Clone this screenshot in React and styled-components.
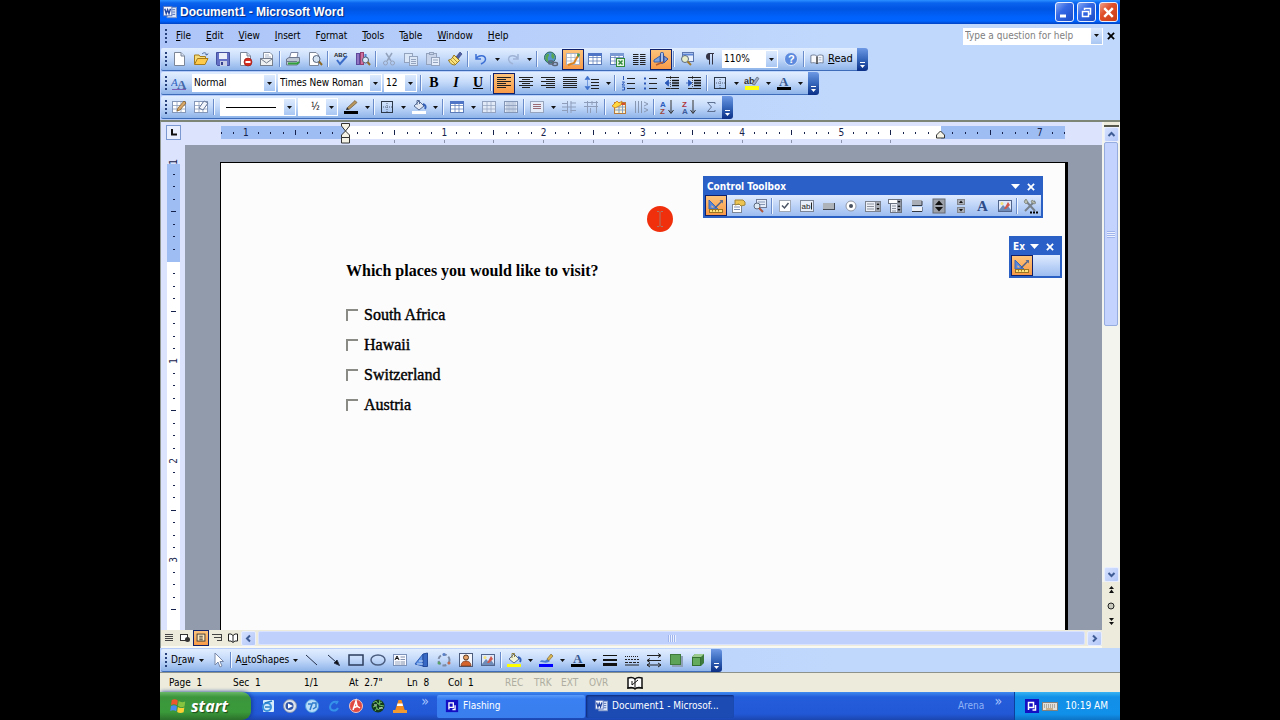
import React, { useState } from 'react';
import styled, { createGlobalStyle, css } from 'styled-components';

const GlobalStyle = createGlobalStyle`
  * {
    box-sizing: border-box;
  }
  body {
    margin: 0;
    background: #000;
    overflow: hidden;
  }
  button, select, input {
    font: inherit;
    color: inherit;
    margin: 0;
    padding: 0;
    border: 0;
    background: none;
    border-radius: 0;
  }
  svg {
    display: block;
    flex: none;
  }
`;

const Screen = styled.div`
  position: relative;
  display: flex;
  flex-direction: column;
  height: 100vh;
  aspect-ratio: 4 / 3;
  margin: 0 auto;
  overflow: hidden;
  background: #c0d8fc;
  color: #000;
  font-family: 'DejaVu Sans Condensed', 'DejaVu Sans', sans-serif;
  font-size: 10px;
  line-height: 14px;
`;

/* title bar */

const TitleBar = styled.header`
  display: flex;
  align-items: center;
  gap: 3px;
  height: 24px;
  padding: 0 2px;
  background: linear-gradient(#2b90ff 0, #0a63ee 3px, #0055e2 9px, #0062fc 17px, #0064ff 21px, #0043c4 24px);
  color: #fff;
`;

const Title = styled.h1`
  flex: 1;
  margin: 0;
  font-family: 'Liberation Sans', sans-serif;
  font-size: 12px;
  line-height: 16px;
  font-weight: bold;
  text-shadow: 1px 1px 1px #0a2a80;
`;

const Caption = styled.button`
  display: grid;
  place-items: center;
  width: 19px;
  height: 20px;
  border: 1px solid #e8efff;
  border-radius: 3px;
  background: ${(p) => (p.$close ? 'linear-gradient(135deg, #f0a088, #e0502a 40%, #c83c14)' : 'linear-gradient(135deg, #86a8f4, #3468e4 40%, #1c4cc8)')};
`;

/* menu bar */

const MenuBar = styled.nav`
  display: flex;
  align-items: center;
  height: 24px;
  padding: 0 2px 0 1px;
  background: linear-gradient(90deg, #adc5f8, #c0d8fc 70%);
`;

const MenuButton = styled.button`
  padding: 0 7px 0 8px;
  white-space: nowrap;
`;

const Grip = styled.span`
  flex: none;
  width: 2px;
  height: 14px;
  margin: 0 1px 0 4px;
  background: repeating-linear-gradient(#27417c 0 2px, transparent 2px 4px);
`;

const Spacer = styled.span`
  flex: 1;
`;

const HelpBox = styled.div`
  display: flex;
  height: 17px;
  margin-right: 1px;
  background: #fff;
`;

const HelpInput = styled.input`
  width: 128px;
  padding: 0 2px;
  color: #777;
  &::placeholder {
    color: #808080;
    opacity: 1;
  }
`;

const CloseDocument = styled.button`
  display: grid;
  place-items: center;
  width: 14px;
  height: 16px;
`;

/* toolbars */

const ToolRow = styled.div`
  display: flex;
  height: 24px;
  padding-left: 1px;
  background: linear-gradient(90deg, #b4caf9, #c0d8fc 70%);
`;

const ToolBody = styled.div`
  display: flex;
  align-items: center;
  height: 23px;
  padding-right: ${(p) => p.$end || 0}px;
  border-bottom: 1px solid #3f6cb8;
  border-radius: 2px 0 0 2px;
  background: linear-gradient(#e2eeff, #c6dbfa 45%, #8fb4ea);
`;

const EndCap = styled.button`
  display: flex;
  align-items: flex-end;
  justify-content: center;
  width: 11px;
  height: 23px;
  padding-bottom: 2px;
  border-radius: 0 3px 3px 0;
  background: linear-gradient(#6d98e4, #3566ba 50%, #0a2f86);
`;

const pressed = css`
  border: 1px solid #10206a;
  background: linear-gradient(#fdc37a, #f89a48);
`;

const Tool = styled.button`
  display: grid;
  place-items: center;
  flex: none;
  width: 22px;
  height: 21px;
  ${(p) => p.$on && pressed}
`;

const CaretTool = styled(Tool)`
  width: 10px;
`;

const TextTool = styled.button`
  display: flex;
  align-items: center;
  gap: 4px;
  padding: 0 ${(p) => p.$pad || 3}px;
  font-size: ${(p) => p.$size || 10}px;
  white-space: nowrap;
`;

const Separator = styled.span`
  flex: none;
  width: 2px;
  height: 16px;
  margin: 0 ${(p) => (p.$wide ? 2 : 1)}px;
  border-left: 1px solid #6a8ccb;
  border-right: 1px solid #f1f7ff;
`;

const Letter = styled.span`
  font-family: 'Liberation Serif', serif;
  font-size: 14px;
  font-weight: bold;
  font-style: ${(p) => (p.$italic ? 'italic' : 'normal')};
  text-decoration: ${(p) => (p.$underline ? 'underline' : 'none')};
`;

const ComboBox = styled.label`
  display: grid;
  align-items: center;
  flex: none;
  width: ${(p) => p.$width}px;
  height: 18px;
  margin: 0 2px 0 ${(p) => p.$before || 0}px;
  background: #fff;
  > * {
    grid-area: 1 / 1;
  }
`;

const ComboSelect = styled.select`
  appearance: none;
  width: 100%;
  height: 18px;
  padding-left: ${(p) => p.$indent || 2}px;
`;

const ComboArrow = styled.span`
  display: grid;
  place-items: center;
  justify-self: end;
  width: 11px;
  height: 16px;
  margin-right: 1px;
  background: linear-gradient(#deebfe, #a9c7f3);
  pointer-events: none;
`;

const ComboSample = styled.span`
  height: 1px;
  margin: 0 20px 0 6px;
  background: #000;
  pointer-events: none;
`;

/* work area */

const Workspace = styled.main`
  display: flex;
  flex: 1;
  min-height: 0;
  border-top: 2px solid #7d8577;
  border-left: 1px solid #8f9690;
`;

const DocPane = styled.section`
  display: flex;
  flex: 1;
  flex-direction: column;
  min-width: 0;
`;

const RulerRow = styled.div`
  display: flex;
  align-items: flex-start;
  flex: none;
  height: 23px;
  padding: 3px 37px 0 5px;
  background: #dbe3fd;
`;

const TabStop = styled.button`
  display: grid;
  place-items: center;
  width: 15px;
  height: 15px;
  margin-right: 40px;
  border: 1px solid #7c98d0;
  background: #e8eefe;
`;

const HRuler = styled.div`
  display: flex;
  justify-content: space-between;
  flex: 1;
  height: 13px;
  margin-top: 1px;
  background: linear-gradient(90deg, #9ebdf3 14.7%, #fff 14.7% 85.3%, #9ebdf3 85.3%);
`;

const HMark = styled.span`
  display: flex;
  flex-direction: column;
  align-items: center;
  width: 0;
  height: 18px;
  overflow: visible;
  white-space: nowrap;
  color: #16224c;
`;

const HTick = styled.i`
  width: 1px;
  height: ${(p) => (p.$long ? 5 : 2)}px;
  margin: ${(p) => (p.$long ? '4px 0' : '6px 0 5px')};
  background: #16224c;
`;

const HLabel = styled.b`
  height: 13px;
  line-height: 13px;
  font-weight: normal;
`;

const TabTick = styled.i`
  width: 1px;
  height: 3px;
  margin-top: 1px;
  background: #8c95ac;
`;

const Marker = styled.svg`
  margin-top: -3px;
`;

const DocRow = styled.div`
  display: flex;
  flex: 1;
  min-height: 0;
`;

const VRulerColumn = styled.div`
  display: flex;
  flex: none;
  width: 24px;
  padding: 17px 5px 0 6px;
  background: #dbe3fd;
`;

const VRuler = styled.div`
  display: flex;
  flex: 1;
  flex-direction: column;
  justify-content: space-between;
  padding-bottom: 20px;
  background: linear-gradient(#dbe3fd 2px, #9ebdf3 2px 100px, #fff 100px);
`;

const VMark = styled.span`
  display: flex;
  align-items: center;
  justify-content: center;
  height: 0;
  overflow: visible;
  color: #16224c;
`;

const VTick = styled.i`
  flex: none;
  width: ${(p) => (p.$long ? 5 : 2)}px;
  height: 1px;
  background: #16224c;
`;

const VLabel = styled.b`
  font-weight: normal;
  transform: rotate(-90deg);
`;

const Desk = styled.div`
  display: flex;
  flex: 1;
  min-width: 0;
  padding: 17px 34px 0 35px;
  background: #919bab;
`;

const Page = styled.article`
  flex: 1;
  padding: 98px 125px 0;
  border: solid #000;
  border-width: 1px 3px 0 1px;
  background: #fdfcfd;
  font-family: 'Liberation Serif', serif;
`;

const Question = styled.h2`
  margin: 0 0 19px;
  font-size: 16px;
  line-height: 20px;
  font-weight: bold;
`;

const Option = styled.label`
  display: flex;
  align-items: center;
  gap: 6px;
  height: 30px;
  font-size: 16px;
  line-height: 20px;
  -webkit-text-stroke: 0.4px #000;
`;

const Tick = styled.input`
  appearance: none;
  width: 12px;
  height: 12px;
  border: solid #8b8b85;
  border-width: 2px 0 0 2px;
  &:checked {
    background: #666;
  }
`;

/* scroll bars */

const BottomBar = styled.div`
  display: flex;
  align-items: center;
  flex: none;
  height: 18px;
  border-bottom: 2px solid #f9f9f2;
  background: #ecebdc;
`;

const ViewButton = styled.button`
  display: grid;
  place-items: center;
  width: 16px;
  height: 16px;
  ${(p) => p.$on && pressed}
`;

const ScrollButton = styled.button`
  display: grid;
  place-items: center;
  flex: none;
  width: 15px;
  height: 15px;
  border: 1px solid #e8eefe;
  border-radius: 2px;
  background: linear-gradient(135deg, #d4e0fe, #b4c8f8);
`;

const HThumb = styled.div`
  display: grid;
  place-items: center;
  flex: 1;
  height: 14px;
  margin: 0 2px;
  border: 1px solid #d9e3ff;
  border-radius: 2px;
  background: #c0d0fc;
`;

const VScroll = styled.aside`
  display: flex;
  flex: none;
  flex-direction: column;
  align-items: center;
  width: 18px;
  background: #f4f4ee;
`;

const SplitBox = styled.span`
  width: 15px;
  height: 5px;
  border-bottom: 2px solid #55564a;
  background: #ecebdc;
`;

const VThumb = styled.div`
  display: grid;
  place-items: center;
  width: 14px;
  height: 35%;
  border: 1px solid #96acdf;
  border-radius: 2px;
  background: #c3d3fd;
`;

const Browse = styled.div`
  display: flex;
  flex-direction: column;
  align-items: center;
  width: 100%;
  padding-bottom: 18px;
  background: #ecebdc;
`;

const BrowseButton = styled.button`
  display: grid;
  place-items: center;
  width: 15px;
  height: 16px;
`;

const GripLines = styled.span`
  width: 8px;
  height: 7px;
  background: repeating-linear-gradient(${(p) => (p.$vertical ? '0deg' : '90deg')}, #9fb4ea 0 1px, #eaf0ff 1px 2px);
`;

/* status bar */

const DrawRow = styled(ToolRow)`
  height: 25px;
  padding-top: 1px;
  border-bottom: 1px solid #8d938b;
`;

const StatusBar = styled.footer`
  display: flex;
  align-items: center;
  flex: none;
  height: 19px;
  padding: 1px 0 0 9px;
  background: #ecebdc;
`;

const Cell = styled.span`
  width: ${(p) => p.$width}px;
  white-space: pre;
  color: ${(p) => (p.$off ? '#aeada0' : '#000')};
`;

/* taskbar */

const Taskbar = styled.footer`
  display: flex;
  align-items: center;
  flex: none;
  height: 28px;
  background: linear-gradient(#3f8bf0, #245ddb 5px, #2258d6 22px, #1b46b0);
  color: #fff;
`;

const Start = styled.button`
  display: flex;
  align-items: center;
  gap: 5px;
  width: 91px;
  height: 28px;
  padding-left: 10px;
  border-radius: 0 9px 9px 0;
  background: linear-gradient(#69b868, #3c963c 5px, #3a9a3a 20px, #2b6f2b);
  box-shadow: 1px 0 4px #123a90;
  font-family: 'Open Sans', sans-serif;
  font-size: 16px;
  line-height: 20px;
  font-weight: bold;
  font-style: italic;
  text-shadow: 1px 1px 1px #1b4a1b;
`;

const QuickLaunch = styled.div`
  display: flex;
  align-items: center;
  margin: 0 1px 0 6px;
`;

const Chevron = styled.button`
  width: 22px;
  height: 24px;
  margin-left: 3px;
  padding-bottom: 10px;
  font-size: 14px;
  line-height: 14px;
  color: #a9c6ff;
`;

const Task = styled.button`
  display: flex;
  align-items: center;
  gap: 4px;
  width: 148px;
  height: 23px;
  margin-right: 1px;
  padding-left: 8px;
  border-radius: 2px;
  background: ${(p) => (p.$on ? '#1c4bb4' : 'linear-gradient(#5a9bfa, #3a80f2 4px, #3a7eee)')};
  box-shadow: ${(p) => (p.$on ? 'inset 1px 1px 2px #0e2c78' : 'none')};
  white-space: nowrap;
`;

const Band = styled.span`
  color: #8fb2f5;
`;

const Tray = styled.div`
  display: flex;
  align-items: center;
  gap: 2px;
  height: 28px;
  margin-left: 5px;
  padding: 0 12px 0 9px;
  border-left: 1px solid #0d3f9c;
  background: linear-gradient(#38b4f4, #1290e8 5px, #1190ea 22px, #0d73c4);
`;

const Clock = styled.time`
  margin-left: 5px;
`;

/* floating windows */

const Floating = styled.section`
  position: absolute;
  top: ${(p) => p.$top}px;
  right: ${(p) => p.$right}px;
  border: 2px solid #2a5fc4;
  background: linear-gradient(#dbe8fe 18px, #9dbdf0);
`;

const FloatTitle = styled.div`
  display: flex;
  align-items: center;
  height: 17px;
  padding: 0 2px;
  background: #2a60c8;
  color: #fff;
  font-weight: bold;
`;

const FloatButton = styled.button`
  display: grid;
  place-items: center;
  width: 16px;
  height: 14px;
`;

const FloatBody = styled.div`
  display: flex;
  align-items: center;
  width: ${(p) => p.$width}px;
  height: 21px;
`;

const FloatSeparator = styled(Separator)`
  margin: 0 1px 0 0;
`;

const Pointer = styled.div`
  position: absolute;
  top: 206px;
  left: 52%;
  display: grid;
  place-items: center;
  width: 26px;
  height: 26px;
  margin-left: -12px;
  border-radius: 50%;
  background: #f0300c;
`;

const bars = (ys, x1, x2, color = '#222', w = 1) => ys.map((y) => (
  <path key={y} d={`M${x1} ${y}H${x2}`} stroke={color} strokeWidth={w} />
));

const tableGrid = (stroke = '#5b7cb8', fill = '#fff') => (
  <>
    <rect x="1.5" y="2.5" width="13" height="11" fill={fill} stroke={stroke} />
    <path d="M2 6.5H14M2 10H14M6 3V13M10 3V13" stroke={stroke} opacity=".75" />
  </>
);

const sheet = (
  <>
    <path d="M3.5 1.5H10L13.5 5V14.5H3.5Z" fill="#fff" stroke="#7b8699" />
    <path d="M10 1.5V5H13.5" fill="#d5deee" stroke="#7b8699" />
  </>
);

const wordLogo = (
  <>
    <rect x="5.5" y="2.5" width="10" height="11" fill="#dce7fb" stroke="#7e95c6" />
    <path d="M11 5H14M11 7.5H14M11 10H14" stroke="#4b6bb0" />
    <rect x="1.5" y="1.5" width="9" height="10" fill="#f4f7ff" stroke="#5573bd" />
    <path d="M3 4L4.5 9L6 5L7.5 9L9 4" fill="none" stroke="#2347a0" strokeWidth="1.5" />
  </>
);

const rulerTriangle = (
  <>
    <path d="M1 2L10 11H1Z" fill="#5a86d8" stroke="#3a66b8" />
    <path d="M3.5 7L6 9.5H3.5Z" fill="#fbb868" />
    <path d="M7 10L14 3" stroke="#4a5f8c" strokeWidth="1.5" />
    <path d="M11.500 2H15V5.500Z" fill="#5a6c90" />
    <rect x="1.5" y="11.5" width="13" height="3" fill="#ffe27a" stroke="#9a7420" />
    <path d="M4.5 12V13.5M7.5 12V13.5M10.5 12V13.5" stroke="#9a7420" />
  </>
);

const screenLogo = (
  <>
    <rect x="1" y="1" width="14" height="14" fill="#1310c4" />
    <path d="M4.500 4.500H9.500V9.500H4.500ZM4.500 9V12M11.500 7V12H8.500" fill="none" stroke="#fff" strokeWidth="1.5" />
  </>
);

const picture = (
  <>
    <rect x="1.5" y="2.5" width="13" height="11" fill="#dfe9fa" stroke="#51658c" />
    <path d="M2 12L6 7L9 10L11 8L14 12V13H2Z" fill="#6f8cb8" />
    <path d="M7 11L11 4L13 7L9 11Z" fill="#d0584c" />
    <circle cx="5" cy="5.5" r="1.5" fill="#f4e27a" />
  </>
);

const icons = {
  newDoc: sheet,
  open: (
    <>
      <path d="M1.5 13V4H6L7 5.5H12.5V8" fill="#f7dc7a" stroke="#a77c1c" />
      <path d="M1.5 13.5L4.5 7.5H15L12 13.5Z" fill="#ffc94a" stroke="#a77c1c" />
      <path d="M9 3C11 1 13 1.5 14 4M14 4L12.5 3.5M14 4L15 2.5" fill="none" stroke="#4a6aa0" />
    </>
  ),
  save: (
    <>
      <path d="M1.5 1.5H14.5V14.5H2.5L1.5 13.5Z" fill="#6470c4" stroke="#4650a0" />
      <rect x="4" y="2" width="8" height="6" fill="#e9eefa" />
      <rect x="5" y="10" width="7" height="5" fill="#c7cde4" />
      <rect x="6" y="11" width="2" height="3" fill="#363f8c" />
    </>
  ),
  permission: (
    <>
      {sheet}
      <circle cx="11" cy="11" r="4" fill="#d62c20" stroke="#8f150e" strokeWidth=".6" />
      <path d="M8.5 11H13.5" stroke="#fff" strokeWidth="2" />
    </>
  ),
  mail: (
    <>
      <path d="M4.5 7V1.5H11L13.5 4V8" fill="#fff" stroke="#8790a0" />
      <path d="M6 4H10M6 6H12" stroke="#a9b4c8" />
      <rect x="1.5" y="7.5" width="12" height="7" fill="#eef0f2" stroke="#767f8e" />
      <path d="M2 8L7.5 12L13 8" fill="none" stroke="#767f8e" />
    </>
  ),
  print: (
    <>
      <path d="M4.5 7L6 1.5H13L12 7" fill="#fff" stroke="#7884a0" />
      <path d="M1.5 8L4 6.5H14.5V12L12 14H1.5Z" fill="#bcc5d2" stroke="#6c7890" />
      <path d="M2 10.5H12" stroke="#6c7890" />
      <path d="M3 12.5H12L14 11" fill="none" stroke="#2fa03a" strokeWidth="2" />
    </>
  ),
  preview: (
    <>
      <path d="M2.5 1.5H9L11.5 4V14.5H2.5Z" fill="#fff" stroke="#7b8699" />
      <circle cx="9.5" cy="8" r="3.5" fill="#d4e4f4" stroke="#56657c" />
      <path d="M12 10.5L15 14" stroke="#8e6a28" strokeWidth="2" />
    </>
  ),
  spelling: (
    <>
      <text x="1" y="6" fontSize="6" fontWeight="bold" fontFamily="Liberation Sans" fill="#222">ABC</text>
      <path d="M4 9L7 13L14 5" fill="none" stroke="#3b6cc8" strokeWidth="2" />
    </>
  ),
  research: (
    <>
      <rect x="1.5" y="2.5" width="3" height="11" fill="#8f74c4" stroke="#5d489c" />
      <rect x="5.5" y="1.5" width="3" height="12" fill="#d070a0" stroke="#94406c" />
      <rect x="9.5" y="3" width="2" height="9" fill="#4f84d0" />
      <circle cx="10.5" cy="9" r="3" fill="#d8e8f8" stroke="#4d5d74" />
      <path d="M12.5 11L15 14" stroke="#93702c" strokeWidth="2" />
    </>
  ),
  cut: (
    <g fill="none" stroke="#94a3bd">
      <path d="M5 2L10 10M11 2L6 10" strokeWidth="1.5" />
      <circle cx="4.5" cy="12" r="2" />
      <circle cx="11.5" cy="12" r="2" />
    </g>
  ),
  copy: (
    <g fill="#dbe6f7" stroke="#94a3bd">
      <rect x="1.5" y="2.5" width="8" height="9" />
      <rect x="6.5" y="5.5" width="8" height="9" />
      <path d="M8 8.5H13M8 10.5H13M8 12.5H13" />
    </g>
  ),
  paste: (
    <g fill="#c6d3e8" stroke="#94a3bd">
      <rect x="1.5" y="2.5" width="10" height="11" />
      <rect x="4.5" y="1.5" width="4" height="2" />
      <rect x="6.5" y="6.5" width="8" height="8" fill="#e5edfa" />
      <path d="M8 9H13M8 11.5H13" />
    </g>
  ),
  painter: (
    <>
      <path d="M9 6L13 1L15 3L11 8Z" fill="#4e5fa4" stroke="#2c3870" strokeWidth=".6" />
      <path d="M7 4L12.5 9.5L8 14C5 14 3 12.5 1.5 9C4 9 5.5 7 7 4Z" fill="#fae27c" stroke="#97761d" />
      <path d="M4 9L8 13M6 7L10 11" stroke="#b8952e" />
    </>
  ),
  undo: <path d="M3 3V8H8M3 8C5 4 12 3.5 12.5 8C12.5 11 10 12 8 13" fill="none" stroke="#3c6fd4" strokeWidth="1.500" />,
  redo: <path d="M13 3V8H8M13 8C11 4 4 3.5 3.5 8C3.5 11 6 12 8 13" fill="none" stroke="#9fb3d6" strokeWidth="1.5" />,
  link: (
    <>
      <circle cx="7" cy="6.5" r="5.5" fill="#5596cc" stroke="#2b6a60" />
      <path d="M3 4C6 1 7 4 5 6C4 8 6 9 5 11C3 10 1.5 8 3 4ZM9 2C12 4 12 7 10 8C8 7 8 4 9 2Z" fill="#58a850" />
      <rect x="5.5" y="10" width="5" height="3" rx="1.5" fill="none" stroke="#5b6678" strokeWidth="1.5" />
      <rect x="9.5" y="11.5" width="5" height="3" rx="1.5" fill="none" stroke="#5b6678" strokeWidth="1.5" />
    </>
  ),
  drawTable: (
    <>
      {tableGrid('#8497b8')}
      <path d="M6 12L7 9L13 2L15 4L9 11Z" fill="#d8a86a" stroke="#80571a" strokeWidth=".7" />
    </>
  ),
  eraser: (
    <>
      {tableGrid('#8497b8')}
      <path d="M6 9L11 2L15 4L10 11Z" fill="#f1f4fb" stroke="#647699" />
    </>
  ),
  borderTable: (
    <>
      {tableGrid('#a8b2c4')}
      <path d="M3 14L9 12L14 3" fill="none" stroke="#d98322" strokeWidth="2" />
      <path d="M12.5 2L15 3.5L14 6L12 5Z" fill="#3e9650" />
    </>
  ),
  insertTable: (
    <>
      {tableGrid()}
      <rect x="1" y="2" width="14" height="3" fill="#4f75c6" />
    </>
  ),
  excel: (
    <>
      {tableGrid()}
      <rect x="1" y="2" width="14" height="3" fill="#7b9ad4" />
      <rect x="7.5" y="7.5" width="8" height="8" fill="#e4f3e2" stroke="#2f8a3a" />
      <path d="M9.5 9.5L13.5 13.5M13.5 9.5L9.5 13.5" stroke="#2f8a3a" strokeWidth="1.5" />
    </>
  ),
  columns: (
    <path d="M2 3.500H7.500M9 3.500H14.500M2 5.500H7.500M9 5.500H14.500M2 7.500H7.500M9 7.500H14.500M2 9.500H7.500M9 9.500H14.500M2 11.500H7.500M9 11.500H14.500M2 13.500H7.500M9 13.500H14.500" stroke="#222" />
  ),
  drawing: (
    <>
      <path d="M1 9L7 5V11H1Z" fill="#7da3e0" stroke="#3a61a8" />
      <rect x="7.5" y="1.5" width="3" height="11" rx="1" fill="#a9c0ea" stroke="#31549c" />
      <path d="M11 5L15 8L11 12Z" fill="#7b9bd8" stroke="#3b4e98" />
      <path d="M3 14L10 11" stroke="#b85a30" strokeWidth="1.5" />
    </>
  ),
  docMap: (
    <>
      <rect x="3.5" y="1.5" width="11" height="9" fill="#e9f0fd" stroke="#5c77b0" />
      <path d="M4 3.5H14" stroke="#5c86d8" strokeWidth="2" />
      <circle cx="6" cy="8" r="3.5" fill="#e6edc8" stroke="#5c6a80" />
      <path d="M8.5 10.5L12 14" stroke="#a47b28" strokeWidth="2" />
    </>
  ),
  paragraph: (
    <>
      <path d="M7.5 2.500H13M8.5 3V13.500M11.5 3V13.500" stroke="#334" />
      <path d="M8.500 2A3.500 3.500 0 0 0 8.500 9Z" fill="#334" />
    </>
  ),
  help: (
    <>
      <circle cx="8" cy="8" r="6.5" fill="#5c8ade" stroke="#d6e4fb" />
      <text x="5" y="12" fontSize="11" fontWeight="bold" fontFamily="Liberation Sans" fill="#fff">?</text>
    </>
  ),
  styles: (
    <>
      <text x="0" y="11" fontSize="11" fontStyle="italic" fontFamily="Liberation Serif" fill="#2d60bc">A</text>
      <text x="6" y="14" fontSize="13" fontWeight="bold" fontFamily="Liberation Serif" fill="#4668a8">A</text>
      <path d="M1 14.5H15" stroke="#7b60b8" />
    </>
  ),
  alignLeft: <>{bars([2.5, 6.5, 10.5], 1, 15)}{bars([4.5, 8.5, 12.5], 1, 10)}</>,
  alignCenter: <>{bars([2.5, 6.5, 10.5], 1, 15)}{bars([4.5, 8.5, 12.5], 4, 12)}</>,
  alignRight: <>{bars([2.5, 6.5, 10.5], 1, 15)}{bars([4.5, 8.5, 12.5], 6, 15)}</>,
  justify: bars([2.5, 4.5, 6.5, 8.5, 10.5, 12.5], 1, 15),
  spacing: (
    <>
      <path d="M3.5 1L6 4.5H1ZM3.5 15L6 11.5H1ZM3.5 5V11" fill="#3e70cc" stroke="#3e70cc" strokeWidth=".6" />
      {bars([4.5, 7.5, 10.5, 13.5], 7, 15)}
    </>
  ),
  numbering: (
    <>
      {bars([3.5, 8.5, 13.5], 7, 15)}
      <path d="M3.5 1V5M2 7H4.5L2 10H5M2 12H4.5V15H2" fill="none" stroke="#2b58b8" />
    </>
  ),
  bullets: (
    <>
      {bars([3.5, 8.5, 13.5], 7, 15)}
      <path d="M2 2.5H4V4.5H2ZM2 7.5H4V9.5H2ZM2 12.5H4V14.5H2Z" fill="#2b58b8" />
    </>
  ),
  outdent: (
    <>
      {bars([2.5, 13.5], 2, 15)}
      {bars([5.5, 8, 10.5], 8, 15, '#111', 1.5)}
      <path d="M1 8L4.5 5V11ZM4 8H7" fill="#2b58b8" stroke="#2b58b8" strokeWidth=".8" />
      <path d="M6.5 1V15" stroke="#555" strokeDasharray="1 1" />
    </>
  ),
  indent: (
    <>
      {bars([2.5, 13.5], 2, 15)}
      {bars([5.5, 8, 10.5], 8, 15, '#111', 1.5)}
      <path d="M6 8L2.5 5V11ZM0 8H3" fill="#2b58b8" stroke="#2b58b8" strokeWidth=".8" />
      <path d="M6.5 1V15" stroke="#555" strokeDasharray="1 1" />
    </>
  ),
  borders: (
    <>
      <rect x="2.5" y="2.5" width="11" height="11" fill="none" stroke="#2d3848" />
      <path d="M8 4V13M4 8H13" stroke="#56657c" strokeDasharray="1 1" />
    </>
  ),
  highlight: (
    <>
      <text x="0" y="9" fontSize="9" fontWeight="bold" fontFamily="Liberation Sans" fill="#333">ab</text>
      <path d="M8 9L13 2L15 3.5L10.5 10Z" fill="#9fa9bd" stroke="#4c5668" strokeWidth=".6" />
      <rect x="1" y="11" width="14" height="4" fill="#ffff10" />
    </>
  ),
  fontColor: (
    <>
      <text x="3" y="10.5" fontSize="13" fontWeight="bold" fontFamily="Liberation Serif" fill="#36588f">A</text>
      <rect x="1" y="12" width="14" height="3" fill="#000" />
    </>
  ),
  penColor: (
    <>
      <path d="M4 9L12 1.5L14 3.5L6 10.5Z" fill="#b7955c" stroke="#5d4824" strokeWidth=".6" />
      <path d="M3 11L4 8.5L6 10.5Z" fill="#222" />
      <rect x="1" y="12" width="14" height="3" fill="#000" />
    </>
  ),
  fillWhite: (
    <>
      <path d="M3 7L8 2L13 7L8 11Z" fill="#e1e8f4" stroke="#566c94" />
      <path d="M12 5C15 6 15 8 14 10" fill="none" stroke="#3562b8" strokeWidth="2" />
      <path d="M6 6V1.5H8.5V5" fill="none" stroke="#566c94" />
      <rect x="1" y="12" width="14" height="3" fill="#fff" />
    </>
  ),
  fillYellow: (
    <>
      <path d="M3 7L8 2L13 7L8 11Z" fill="#eff2d4" stroke="#566c94" />
      <path d="M12 5C15 6 15 8 14 10" fill="none" stroke="#3562b8" strokeWidth="2" />
      <path d="M6 6V1.5H8.5V5" fill="none" stroke="#8c7c3c" />
      <rect x="1" y="12" width="14" height="3" fill="#ffff00" />
    </>
  ),
  lineColor: (
    <>
      <path d="M2 10C4 6 7 11 9 7L12 9C9 12 5 10 2 10Z" fill="#4a7cd0" />
      <path d="M9 7L13 2L15 4L11 8.5Z" fill="#d9b44e" stroke="#6e5a2a" strokeWidth=".6" />
      <rect x="1" y="12" width="14" height="3" fill="#0000ff" />
    </>
  ),
  merge: tableGrid('#93a3bf', '#e2eaf8'),
  split: (
    <>
      {tableGrid('#8496b6', '#e2eaf8')}
      <path d="M4 3V13M8 3V13M12 3V13" stroke="#8496b6" opacity=".6" />
    </>
  ),
  cellAlign: (
    <>
      <rect x="1.5" y="2.5" width="13" height="11" fill="#e4ecfa" stroke="#96a4be" />
      {bars([5.5, 7.5, 9.5], 4, 12, '#9a6a74')}
    </>
  ),
  rows: <path d="M1 4.5H6M1 8H15M1 11.5H6M6.5 2V14M9.5 4H15M9.5 11.5H15M10 2V14" stroke="#8d9dba" fill="none" />,
  cols: <path d="M1 3.5H15M1 7.5H15M4.5 2V14M9 2V6M13.5 2V14M7.5 9V14" stroke="#8d9dba" fill="none" />,
  autoFormat: (
    <>
      <rect x="3.5" y="3.5" width="11" height="11" fill="#fff4d2" stroke="#b87a38" />
      <path d="M4 5H14" stroke="#d8502c" strokeWidth="2" />
      <path d="M4 8H14M4 11H14M8 6V14M11.5 6V14" stroke="#83a0c4" />
      <path d="M1 7L6 2L8 4L11 2L10 6L4 9Z" fill="#ffd840" stroke="#c87a24" strokeWidth=".8" />
    </>
  ),
  textDir: (
    <>
      <path d="M2.5 2V14M5.5 2V14M8.5 2V14" stroke="#8797b2" />
      <path d="M11 3L15 5L11 7M11 9L15 11L11 13" fill="none" stroke="#8797b2" />
    </>
  ),
  sortAsc: (
    <>
      <text x="1" y="8" fontSize="8" fontFamily="Liberation Sans" fontWeight="bold" fill="#2b5dbc">A</text>
      <text x="1" y="15" fontSize="8" fontFamily="Liberation Sans" fontWeight="bold" fill="#a0463a">Z</text>
      <path d="M12 1V14M9.5 11L12 14.5L14.5 11" fill="none" stroke="#333" />
    </>
  ),
  sortDesc: (
    <>
      <text x="1" y="8" fontSize="8" fontFamily="Liberation Sans" fontWeight="bold" fill="#b0343a">Z</text>
      <text x="1" y="15" fontSize="8" fontFamily="Liberation Sans" fontWeight="bold" fill="#3c5c9c">A</text>
      <path d="M12 1V14M9.5 11L12 14.5L14.5 11" fill="none" stroke="#333" />
    </>
  ),
  sum: <path d="M12 5V3.500H4.500L8.5 8L4.500 12.500H12V11" fill="none" stroke="#5f7191" />,
  arrow: <path d="M5 1V13L8 10L10 15L12 14L10 9.5H13.5Z" fill="#fff" stroke="#7788a8" />,
  line: <path d="M2 3L13 13" stroke="#26324c" />,
  arrowLine: <path d="M2 3L10 10M13.5 13.5L8 11L11 8Z" stroke="#26324c" fill="#111" />,
  rect: <rect x="1" y="3" width="14" height="10" fill="none" stroke="#2c3c5c" strokeWidth="1.5" />,
  ellipse: <ellipse cx="8" cy="8" rx="7" ry="5" fill="none" stroke="#4c5e80" strokeWidth="1.5" />,
  textBox: (
    <>
      <rect x="1.5" y="2.5" width="13" height="11" fill="#f8faff" stroke="#7c92b8" />
      <path d="M3 8L5 4L7 8M4 6.5H6" fill="none" stroke="#111" />
      {bars([5, 7.5, 10, 12], 8.5, 13, '#8190ac')}
      <path d="M3 10H8M3 12H8" stroke="#9aa8c0" />
    </>
  ),
  wordArt: (
    <>
      <path d="M1 12L9 2V14Z" fill="#5d92e4" stroke="#2d5cb4" />
      <path d="M9 2L13.5 1V14.5H9Z" fill="#3668c4" stroke="#234a98" />
      <path d="M3 12H9M5 9H9" stroke="#c8dcfa" />
    </>
  ),
  diagram: (
    <>
      <circle cx="8" cy="8" r="5.5" fill="none" stroke="#7d8ba4" strokeWidth="2" strokeDasharray="4 2" />
      <circle cx="8" cy="2.5" r="1.5" fill="#5a80c8" />
      <circle cx="13" cy="11" r="1.5" fill="#c46a4c" />
      <circle cx="3" cy="11" r="1.5" fill="#58a068" />
    </>
  ),
  clipArt: (
    <>
      <rect x="1.5" y="1.5" width="13" height="13" fill="#f4f6fb" stroke="#4c5c7c" />
      <circle cx="8" cy="5.5" r="2.5" fill="#e8a468" stroke="#5c3820" />
      <path d="M3 14C3 10 6 9 8 9C10 9 13 10 13 14Z" fill="#d4642c" stroke="#6a3420" strokeWidth=".7" />
    </>
  ),
  picture,
  lineStyle: (
    <>
      {bars([3.5], 1, 15, '#111')}
      {bars([8], 1, 15, '#111', 2)}
      {bars([12.5], 1, 15, '#111', 3)}
    </>
  ),
  dashStyle: (
    <g stroke="#222">
      <path d="M1 4.5H15" strokeDasharray="1 1" />
      <path d="M1 7.5H15" strokeDasharray="2 1" />
      <path d="M1 10.5H15" strokeDasharray="3 1" />
      <path d="M1 13H15" />
    </g>
  ),
  arrowStyle: (
    <path d="M1 3.500H15M12 1.500L15 3.500L12 5.500M1 8.5H15M4 6.5L1 8.5L4 10.5M1 13H15M4 11L1 13L4 15M12 11L15 13L12 15" fill="none" stroke="#222" />
  ),
  shadow: (
    <>
      <rect x="4" y="4" width="11" height="11" fill="#8da0b8" />
      <rect x="2.5" y="2.5" width="10" height="10" fill="#5ea458" stroke="#3e7a3c" />
    </>
  ),
  cube: (
    <>
      <path d="M2 5L5 2H14V11L11 14H2Z" fill="#3d7a3c" />
      <path d="M2 5L5 2H14L11 5Z" fill="#9ccb90" />
      <rect x="2.5" y="5.5" width="8" height="8" fill="#65ab5e" stroke="#34702f" />
    </>
  ),
  design: rulerTriangle,
  properties: (
    <>
      <rect x="2.5" y="6.5" width="9" height="8" fill="#fff" stroke="#7c8798" />
      <path d="M4 9H10M4 11.5H10" stroke="#7d90b4" />
      <path d="M5 2H13L15 4V7L11 8L9 6L5 7Z" fill="#edc452" stroke="#a08438" />
    </>
  ),
  viewCode: (
    <>
      <rect x="4.5" y="1.5" width="10" height="8" fill="#e5ecf8" stroke="#6d7b98" />
      <path d="M6 4H13M6 6.5H13" stroke="#8596b5" />
      <circle cx="5" cy="8" r="3" fill="#dce8f4" stroke="#5c6a80" />
      <path d="M7 10L11 14" stroke="#b1583c" strokeWidth="2" />
    </>
  ),
  ctlCheck: (
    <>
      <rect x="2.5" y="2.5" width="11" height="11" fill="#fff" stroke="#a0a7b4" />
      <path d="M5 7.5L7.5 10L11.5 5" fill="none" stroke="#4b5464" strokeWidth="1.5" />
    </>
  ),
  ctlText: (
    <>
      <rect x="1.5" y="2.5" width="13" height="11" fill="#e9eff8" stroke="#7b8598" />
      <text x="2.5" y="11" fontSize="8" fontFamily="Liberation Sans" fill="#222">ab</text>
      <path d="M12.5 4.5V11.5" stroke="#222" />
    </>
  ),
  ctlButton: (
    <>
      <path d="M2 11H13V5" fill="none" stroke="#444a54" strokeWidth="2" />
      <rect x="2" y="5" width="11" height="6" fill="#aeb3ba" />
    </>
  ),
  ctlOption: (
    <>
      <circle cx="8" cy="8" r="5" fill="#fff" stroke="#8f96a4" />
      <circle cx="8" cy="8" r="2" fill="#495160" />
    </>
  ),
  ctlList: (
    <>
      <rect x=".5" y="3.5" width="15" height="10" fill="#edf1f7" stroke="#7a8290" />
      <path d="M2 6H9M2 8.5H9M2 11H9M10.5 4V13" stroke="#8b929e" />
      <rect x="11" y="4" width="4" height="9" fill="#a4a9b2" />
      <path d="M13 5L14.5 7H11.5ZM13 12L14.5 10H11.5Z" fill="#111" />
    </>
  ),
  ctlCombo: (
    <>
      <rect x="1.5" y="1.5" width="13" height="4" fill="#fff" stroke="#6c7482" />
      <rect x="3.5" y="5.5" width="11" height="9" fill="#edf1f7" stroke="#6c7482" />
      <path d="M5 8H9M5 10.5H9M5 13H9" stroke="#8b929e" />
      <rect x="10" y="2" width="4" height="12" fill="#9298a4" />
      <path d="M10.5 3H13.5L12 5ZM12 7L13.5 9H10.5ZM12 13L13.5 11H10.5Z" fill="#111" />
    </>
  ),
  ctlToggle: (
    <>
      <rect x="3" y="2" width="10" height="5" fill="#a9aeb7" />
      <path d="M3 7.5H13V3M3 13.5H13V9" fill="none" stroke="#343a44" />
      <rect x="3" y="9" width="10" height="4" fill="#eef2f8" />
    </>
  ),
  ctlSpin: (
    <>
      <rect x="2" y="1" width="12" height="14" fill="#9da2aa" stroke="#636973" />
      <path d="M8 2.5L12 7H4ZM8 13.5L12 9H4Z" fill="#111" />
    </>
  ),
  ctlScroll: (
    <>
      <rect x="4.5" y="1.5" width="7" height="5" fill="#a9aeb7" stroke="#81868f" />
      <rect x="4.5" y="9.5" width="7" height="5" fill="#a9aeb7" stroke="#81868f" />
      <path d="M8 2.5L10 5H6ZM8 13.5L10 11H6Z" fill="#111" />
    </>
  ),
  ctlLabel: <text x="2" y="13" fontSize="15" fontFamily="Liberation Serif" fontWeight="bold" fill="#2d4c88">A</text>,
  tools: (
    <>
      <path d="M3 2L13 13M13 3L3 13" stroke="#77818c" strokeWidth="2" />
      <path d="M10 2L14 5L12 6L9 4ZM2 4L4 1L6 4L4 6Z" fill="#b7bcae" stroke="#6d7268" strokeWidth=".6" />
      <path d="M8 14.5H10M11 14.5H13M14 14.5H16" stroke="#000" strokeWidth="2" />
    </>
  ),
  word: wordLogo,
  capture: screenLogo,
  book: (
    <>
      <path d="M1 3C4 2 6 2 8 4C10 2 12 2 15 3V13C12 12 10 12 8 14C6 12 4 12 1 13Z" fill="#fff" stroke="#111" strokeWidth="1.5" />
      <path d="M8 4V14M5 6V10M5 10L11 5" stroke="#111" />
      <path d="M0 13H7M9 13H16" stroke="#111" />
    </>
  ),
  read: (
    <>
      <path d="M1 4C4 3 6 3 8 5C10 3 12 3 15 4V12.5C12 12 10 12 8 13.5C6 12 4 12 1 12.5Z" fill="#f7f9fd" stroke="#68768e" />
      <path d="M8 5V13.5" stroke="#222" strokeWidth="1.5" />
      <path d="M10 6.5H13M10 9H13" stroke="#98a5bb" />
    </>
  ),
  outlook: (
    <>
      <rect x="3" y="2" width="11" height="12" rx="1" fill="#d5ecfc" />
      <circle cx="7" cy="9" r="4" fill="none" stroke="#3a92dc" strokeWidth="2" />
      <path d="M5 5L12 3M5 9H10" stroke="#277cc8" strokeWidth="1.5" />
    </>
  ),
  player: (
    <>
      <circle cx="8" cy="8" r="6.5" fill="#dce3ec" stroke="#8291ac" />
      <circle cx="7.5" cy="8" r="4" fill="#2d54a8" />
      <path d="M6 5.5L11 8L6 10.5Z" fill="#fff" />
    </>
  ),
  messenger: (
    <>
      <circle cx="8" cy="8" r="6.5" fill="#b9dcf8" stroke="#4a9be0" />
      <path d="M4 6H8L6 12M8 5H12V9L9 11" fill="none" stroke="#2f7bcc" strokeWidth="1.5" />
    </>
  ),
  explorer: <path d="M12 3L10 6M11 4C7 3 4 6 4 9C4 13 10 14 12 10" fill="none" stroke="#3592e8" strokeWidth="2" />,
  acrobat: (
    <>
      <circle cx="8" cy="8" r="6.5" fill="#e04840" stroke="#f3c5c0" />
      <path d="M5 12L8 3L9 8L12 10M5 10L10 8" fill="none" stroke="#fff" strokeWidth="1.5" />
    </>
  ),
  globe: (
    <>
      <circle cx="8" cy="8" r="6.5" fill="#133a1c" />
      <path d="M3 5L6 3L8 6L12 4M3 9L6 8L8 12L12 9M5 13L7 10M10 2L9 7L14 8" stroke="#6fbf60" fill="none" />
      <path d="M4 7H7M9 10H13" stroke="#e6f3e4" />
    </>
  ),
  vlc: (
    <>
      <path d="M6.5 2H9.5L13 13H3Z" fill="#f58a1e" />
      <path d="M5.5 5.5H10.5L11 8H4.8Z" fill="#fff" />
      <path d="M1 12H15V15H1Z" fill="#f09a34" />
    </>
  ),
  keyboard: (
    <>
      <rect x=".5" y="4.5" width="15" height="8" fill="#e2e0d8" stroke="#83817a" />
      <path d="M2 7H14M2 9H14" stroke="#77756c" strokeDasharray="1 1" />
      <path d="M4 11H11" stroke="#b08040" />
    </>
  ),
  flag: (
    <g transform="rotate(8 8 8)">
      <path d="M1 3C3 1.5 5 1.5 7 2.5V7.5C5 6.5 3 6.5 1 8Z" fill="#f0562c" />
      <path d="M8 3C10 4 12 4 14.5 2.5V7.5C12 9 10 9 8 8Z" fill="#86c440" />
      <path d="M1 9C3 7.5 5 7.5 7 8.5V13.5C5 12.5 3 12.5 1 14Z" fill="#4b8af0" />
      <path d="M8 9C10 10 12 10 14.5 8.5V13.5C12 15 10 15 8 14Z" fill="#fcd034" />
    </g>
  ),
  viewNormal: bars([4.5, 6.5, 8.5, 10.5], 4, 12, '#444'),
  viewWeb: (
    <>
      <rect x="3.5" y="4.5" width="7" height="6" fill="#fff" stroke="#333" />
      <circle cx="10.5" cy="9.5" r="2.5" fill="#333" />
    </>
  ),
  viewPrint: (
    <>
      <rect x="3.5" y="3.5" width="9" height="8" fill="#ffe6b8" stroke="#333" />
      <path d="M6 6H10M6 8H10M6 10H10" stroke="#333" />
    </>
  ),
  viewOutline: <path d="M3 4.5H12M5 7.5H12M8 10.5H12M12.5 4V11" stroke="#444" fill="none" />,
  viewRead: (
    <path d="M3.5 4H6L8 5.5L10 4H12.5V11H10L8 12.5L6 11H3.5ZM8 5.5V12" fill="#fff" stroke="#222" />
  ),
};

const Icon = ({ name, size = 16 }) => (
  <svg width={size} height={size} viewBox="0 0 16 16" fill="none" aria-hidden="true">{icons[name]}</svg>
);

const Caret = ({ color = '#111' }) => (
  <svg width="5" height="3" viewBox="0 0 5 3" aria-hidden="true"><path d="M0 0H5L2.5 3Z" fill={color} /></svg>
);

const Arrow = ({ turn = 0 }) => (
  <svg width="9" height="9" viewBox="0 0 9 9" aria-hidden="true">
    <path d="M1.5 6L4.5 3L7.5 6" fill="none" stroke="#3f5c94" strokeWidth="2" transform={`rotate(${turn} 4.5 4.5)`} />
  </svg>
);

const Cross = ({ color = '#000', size = 9 }) => (
  <svg width={size} height={size} viewBox="0 0 9 9" aria-hidden="true">
    <path d="M1 1L8 8M8 1L1 8" stroke={color} strokeWidth="2" />
  </svg>
);

// '|' and '||' are separators, 'v' is a drop-down arrow, a leading '!' marks a pressed button
const Tools = ({ list }) => list.split(' ').map((entry, i) => {
  if (entry === '|' || entry === '||') return <Separator key={i} $wide={entry === '||'} />;
  if (entry === 'v') return <CaretTool key={i} aria-label="More"><Caret /></CaretTool>;
  const on = entry[0] === '!';
  const name = on ? entry.slice(1) : entry;
  return <Tool key={i} $on={on} aria-label={name}><Icon name={name} /></Tool>;
});

const Combo = ({ label, value, width, before, indent, children }) => (
  <ComboBox $width={width} $before={before}>
    <ComboSelect aria-label={label} $indent={indent}>
      <option>{value}</option>
    </ComboSelect>
    {children}
    <ComboArrow><Caret /></ComboArrow>
  </ComboBox>
);

const ToolEnd = () => (
  <EndCap aria-label="Toolbar options">
    <svg width="7" height="7" viewBox="0 0 7 7" aria-hidden="true">
      <path d="M1 .5H6" stroke="#fff" />
      <path d="M1 3H6L3.5 6Z" fill="#fff" />
    </svg>
  </EndCap>
);

const menus = [
  ['', 'F', 'ile'],
  ['', 'E', 'dit'],
  ['', 'V', 'iew'],
  ['', 'I', 'nsert'],
  ['F', 'o', 'rmat'],
  ['', 'T', 'ools'],
  ['T', 'a', 'ble'],
  ['', 'W', 'indow'],
  ['', 'H', 'elp'],
];

const places = ['South Africa', 'Hawaii', 'Switzerland', 'Austria'];

const HorizontalRuler = () => {
  const marks = [];
  for (let i = 0; i <= 68; i += 1) {
    const eighth = i - 10;
    const inch = Math.abs(eighth / 8);
    let mark = <HTick $long={eighth % 4 === 0} />;
    if (eighth % 8 === 0) mark = <HLabel>{inch}</HLabel>;
    if (eighth === 0) {
      mark = (
        <Marker width="9" height="21" viewBox="0 0 9 21">
          <path d="M.5.5H8.5V3L4.5 8L.5 3ZM4.5 8L8.5 12V14.5H.5V12ZM.5 14.5H8.5V20H.5Z" fill="#f5f3e6" stroke="#333" />
        </Marker>
      );
    }
    if (eighth === 48) {
      mark = (
        <svg width="9" height="13" viewBox="0 0 9 13">
          <path d="M4.5 5L8.5 9V12H.5V9Z" fill="#f5f3e6" stroke="#333" />
        </svg>
      );
    }
    marks.push(
      <HMark key={i}>
        {mark}
        {eighth > 0 && eighth < 48 && eighth % 4 === 0 && <TabTick />}
      </HMark>
    );
  }
  return <HRuler>{marks}</HRuler>;
};

const VerticalRuler = () => {
  const marks = [];
  for (let i = 0; i <= 36; i += 1) {
    const eighth = i - 8;
    let mark = <VTick $long={eighth % 4 === 0} />;
    if (eighth % 8 === 0) mark = <VLabel>{Math.abs(eighth / 8)}</VLabel>;
    if (eighth === 0) mark = null;
    marks.push(<VMark key={i}>{mark}</VMark>);
  }
  return <VRuler>{marks}</VRuler>;
};

const FloatHeader = ({ title }) => (
  <FloatTitle>
    {title}
    <Spacer />
    <FloatButton aria-label="Options">
      <svg width="9" height="5" viewBox="0 0 9 5"><path d="M0 0H9L4.5 5Z" fill="#fff" /></svg>
    </FloatButton>
    <FloatButton aria-label="Close"><Cross color="#fff" size={8} /></FloatButton>
  </FloatTitle>
);

const App = () => {
  const [checked, setChecked] = useState([]);

  const togglePlace = (place) => {
    setChecked(checked.includes(place) ? checked.filter((p) => p !== place) : [...checked, place]);
  };

  return (
    <>
      <GlobalStyle />
      <Screen>
        <TitleBar>
          <Icon name="word" size={15} />
          <Title>Document1 - Microsoft Word</Title>
          <Caption aria-label="Minimize">
            <svg width="11" height="11" viewBox="0 0 11 11"><path d="M1 9H7" stroke="#fff" strokeWidth="3" /></svg>
          </Caption>
          <Caption aria-label="Restore">
            <svg width="11" height="11" viewBox="0 0 11 11">
              <path d="M3.5 3V1.5H9.5V7H8M1.5 4.5H7.5V9.5H1.5Z" fill="none" stroke="#fff" strokeWidth="1.5" />
            </svg>
          </Caption>
          <Caption $close aria-label="Close"><Cross color="#fff" size={11} /></Caption>
        </TitleBar>

        <MenuBar>
          <Grip />
          {menus.map(([pre, key, rest]) => (
            <MenuButton key={pre + key + rest}>{pre}<u>{key}</u>{rest}</MenuButton>
          ))}
          <Spacer />
          <HelpBox>
            <HelpInput aria-label="Type a question for help" placeholder="Type a question for help" />
            <ComboArrow><Caret /></ComboArrow>
          </HelpBox>
          <CloseDocument aria-label="Close document"><Cross size={8} /></CloseDocument>
        </MenuBar>

        <ToolRow>
          <ToolBody>
            <Grip />
            <Tools list="newDoc open save permission mail | print preview | spelling research | cut copy paste painter | undo v redo v || link !borderTable insertTable excel columns !drawing | docMap paragraph" />
            <Combo label="Zoom" value="110%" width={56} before={2} />
            <Tools list="help |" />
            <TextTool $pad={4} $size={11}><Icon name="read" size={14} /><span><u>R</u>ead</span></TextTool>
          </ToolBody>
          <ToolEnd />
        </ToolRow>

        <ToolRow>
          <ToolBody $end={3}>
            <Grip />
            <Tools list="styles" />
            <Combo label="Style" value="Normal" width={84} before={2} />
            <Combo label="Font" value="Times New Roman" width={104} />
            <Combo label="Font size" value="12" width={33} />
            <Separator />
            <Tool aria-label="Bold"><Letter>B</Letter></Tool>
            <Tool aria-label="Italic"><Letter $italic>I</Letter></Tool>
            <Tool aria-label="Underline"><Letter $underline>U</Letter></Tool>
            <Tools list="| !alignLeft alignCenter alignRight justify spacing v | numbering bullets outdent indent | borders v highlight v fontColor v" />
          </ToolBody>
          <ToolEnd />
        </ToolRow>

        <ToolRow>
          <ToolBody>
            <Grip />
            <Tools list="drawTable eraser |" />
            <Combo label="Line style" value="" width={76} before={4}><ComboSample /></Combo>
            <Combo label="Line weight" value="½" width={40} indent={13} />
            <Tools list="penColor v | borders v fillWhite v || insertTable v merge split | cellAlign v rows cols || autoFormat textDir | sortAsc sortDesc sum" />
          </ToolBody>
          <ToolEnd />
        </ToolRow>

        <Workspace>
          <DocPane>
            <RulerRow>
              <TabStop aria-label="Left tab">
                <svg width="7" height="7" viewBox="0 0 7 7"><path d="M2 0V5.5H7" fill="none" stroke="#111" strokeWidth="2" /></svg>
              </TabStop>
              <HorizontalRuler />
            </RulerRow>
            <DocRow>
              <VRulerColumn><VerticalRuler /></VRulerColumn>
              <Desk>
                <Page>
                  <Question>Which places you would like to visit?</Question>
                  {places.map((place) => (
                    <Option key={place}>
                      <Tick type="checkbox" checked={checked.includes(place)} onChange={() => togglePlace(place)} />
                      {place}
                    </Option>
                  ))}
                </Page>
              </Desk>
            </DocRow>
            <BottomBar>
              <ViewButton aria-label="Normal view"><Icon name="viewNormal" /></ViewButton>
              <ViewButton aria-label="Web layout"><Icon name="viewWeb" /></ViewButton>
              <ViewButton $on aria-label="Print layout"><Icon name="viewPrint" size={14} /></ViewButton>
              <ViewButton aria-label="Outline"><Icon name="viewOutline" /></ViewButton>
              <ViewButton aria-label="Reading layout"><Icon name="viewRead" /></ViewButton>
              <ScrollButton aria-label="Scroll left"><Arrow turn={-90} /></ScrollButton>
              <HThumb><GripLines /></HThumb>
              <ScrollButton aria-label="Scroll right"><Arrow turn={90} /></ScrollButton>
            </BottomBar>
          </DocPane>
          <VScroll>
            <SplitBox />
            <ScrollButton aria-label="Scroll up"><Arrow /></ScrollButton>
            <VThumb><GripLines $vertical /></VThumb>
            <Spacer />
            <ScrollButton aria-label="Scroll down"><Arrow turn={180} /></ScrollButton>
            <Browse>
              <BrowseButton aria-label="Previous page">
                <svg width="7" height="8" viewBox="0 0 7 8"><path d="M3.5 0L6 3H1ZM3.5 3.5L6 7H1Z" fill="#111" /></svg>
              </BrowseButton>
              <BrowseButton aria-label="Select browse object">
                <svg width="8" height="8" viewBox="0 0 8 8"><circle cx="4" cy="4" r="3" fill="#c9c9bd" stroke="#222" /></svg>
              </BrowseButton>
              <BrowseButton aria-label="Next page">
                <svg width="7" height="8" viewBox="0 0 7 8"><path d="M1 0H6L3.5 3ZM1 4H6L3.5 7Z" fill="#111" /></svg>
              </BrowseButton>
            </Browse>
          </VScroll>
        </Workspace>

        <DrawRow>
          <ToolBody $end={2}>
            <Grip />
            <TextTool><span>D<u>r</u>aw</span><Caret /></TextTool>
            <Tools list="arrow |" />
            <TextTool><span>A<u>u</u>toShapes</span><Caret /></TextTool>
            <Tools list="line arrowLine rect ellipse textBox wordArt diagram clipArt picture | fillYellow v lineColor v fontColor v lineStyle dashStyle arrowStyle shadow cube" />
          </ToolBody>
          <ToolEnd />
        </DrawRow>

        <StatusBar>
          <Cell $width={64}>Page  1</Cell>
          <Cell $width={71}>Sec  1</Cell>
          <Cell $width={45}>1/1</Cell>
          <Cell $width={58}>At  2.7"</Cell>
          <Cell $width={41}>Ln  8</Cell>
          <Cell $width={57}>Col  1</Cell>
          <Cell $off $width={29}>REC</Cell>
          <Cell $off $width={27}>TRK</Cell>
          <Cell $off $width={28}>EXT</Cell>
          <Cell $off $width={38}>OVR</Cell>
          <Icon name="book" />
        </StatusBar>

        <Taskbar>
          <Start><Icon name="flag" />start</Start>
          <QuickLaunch>
            <Tools list="outlook player messenger explorer acrobat globe vlc" />
            <Chevron aria-label="More programs">»</Chevron>
          </QuickLaunch>
          <Task><Icon name="capture" size={14} />Flashing</Task>
          <Task $on><Icon name="word" size={14} />Document1 - Microsof...</Task>
          <Spacer />
          <Band>Arena</Band>
          <Chevron aria-label="More toolbars">»</Chevron>
          <Tray>
            <Icon name="capture" />
            <Icon name="keyboard" />
            <Clock>10:19 AM</Clock>
          </Tray>
        </Taskbar>

        <Floating $top={176} $right={77} aria-label="Control Toolbox">
          <FloatHeader title="Control Toolbox" />
          <FloatBody $width={336}>
            <Tools list="!design properties viewCode" />
            <FloatSeparator />
            <Tools list="ctlCheck ctlText ctlButton ctlOption ctlList ctlCombo ctlToggle ctlSpin ctlScroll ctlLabel picture" />
            <FloatSeparator />
            <Tools list="tools" />
          </FloatBody>
        </Floating>
        <Floating $top={236} $right={58} aria-label="Exit Design Mode">
          <FloatHeader title="Ex" />
          <FloatBody $width={49}>
            <Tools list="!design" />
          </FloatBody>
        </Floating>
        <Pointer>
          <svg width="8" height="16" viewBox="0 0 8 16">
            <path d="M1 .5H3L4 1.5L5 .5H7M4 1.5V14.5M1 15.5H3L4 14.5L5 15.5H7" fill="none" stroke="#a8786a" />
          </svg>
        </Pointer>
      </Screen>
    </>
  );
};

export default App;
